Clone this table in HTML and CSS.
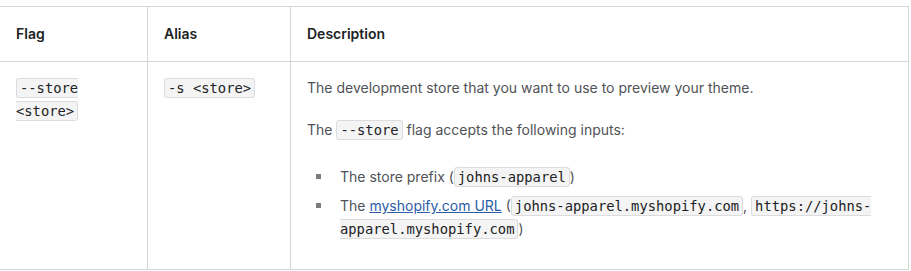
FILE: index.html
```html
<!DOCTYPE html>
<html lang="en">
<head>
    <meta charset="UTF-8">
    <title>theme dev flags</title>
    <link rel="stylesheet" href="styles.css">
</head>
<body>
    <table class="flags">
        <thead>
            <tr>
                <th class="col-flag">Flag</th>
                <th class="col-alias">Alias</th>
                <th>Description</th>
            </tr>
        </thead>
        <tbody>
            <tr>
                <td><code>--store &lt;store&gt;</code></td>
                <td><code>-s &lt;store&gt;</code></td>
                <td>
                    <p>The development store that you want to use to preview your theme.</p>
                    <p>The <code>--store</code> flag accepts the following inputs:</p>
                    <ul>
                        <li>The store prefix (<code>johns-apparel</code>)</li>
                        <li>The <a href="#">myshopify.com URL</a> (<code>johns-apparel.myshopify.com</code>, <code>https://johns-apparel.myshopify.com</code>)</li>
                    </ul>
                </td>
            </tr>
        </tbody>
    </table>
</body>
</html>
```

FILE: styles.css
```css
body {
    font-family: Inter, 'Noto Sans', sans-serif;
    font-size: 14px;
    color: #505256;
    background-color: #fff;
    margin: 0;
    padding: 0;
}
.flags {
    border-collapse: collapse;
    width: 910px;
    margin: 6px 0 0 -1px;
    table-layout: fixed;
}
.flags th, .flags td {
    border: 1px solid #d6d6d9;
    padding: 16px;
    text-align: left;
    vertical-align: top;
}
.flags th {
    color: #202223;
    font-weight: 600;
    line-height: 21px;
    padding: 16px 16px 17px;
}
.col-flag {
    width: 115px;
}
.col-alias {
    width: 110px;
}
.flags td {
    line-height: 23px;
    padding-top: 14px;
    padding-bottom: 17px;
}
p {
    margin: 0 0 19px;
}
code {
    font-family: 'DejaVu Sans Mono', monospace;
    font-size: 13.8px;
    line-height: 16px;
    color: #202223;
    background-color: #f4f4f5;
    border: 1px solid #dcdcdf;
    border-radius: 3px;
    padding: 1px 3px;
}
ul {
    list-style: none;
    margin: 24px 0 12px;
    padding-left: 33px;
}
li {
    position: relative;
    margin-bottom: 6px;
}
li::before {
    content: '';
    position: absolute;
    left: -24px;
    top: 9px;
    width: 5px;
    height: 5px;
    background-color: #7a7c80;
}
a {
    color: #2c5ba8;
}
```
